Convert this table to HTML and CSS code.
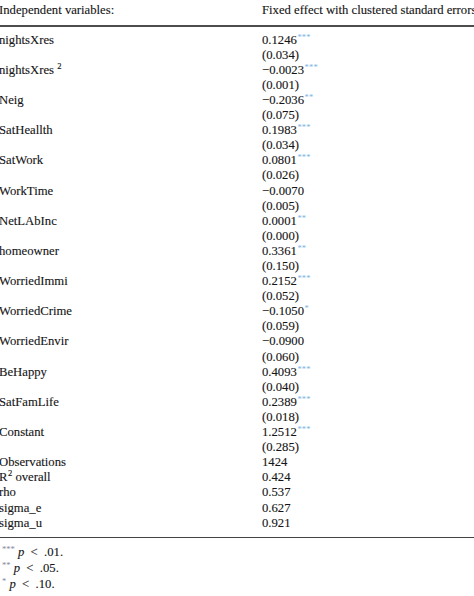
FILE: index.html
```html
<!DOCTYPE html>
<html>
<head>
<meta charset="utf-8">
<link rel="stylesheet" href="styles.css">
</head>
<body>
<div class="page">
  <div class="row head">
    <div class="lab">Independent variables:</div>
    <div class="val">Fixed effect with clustered standard errors</div>
  </div>
  <div class="tbody">
    <div class="row"><div class="lab">nightsXres</div><div class="val"><div>0.1246<sup class="st">***</sup></div><div>(0.034)</div></div></div>
    <div class="row"><div class="lab">nightsXres <sup class="sq">2</sup></div><div class="val"><div>−0.0023<sup class="st">***</sup></div><div>(0.001)</div></div></div>
    <div class="row"><div class="lab">Neig</div><div class="val"><div>−0.2036<sup class="st">**</sup></div><div>(0.075)</div></div></div>
    <div class="row"><div class="lab">SatHeallth</div><div class="val"><div>0.1983<sup class="st">***</sup></div><div>(0.034)</div></div></div>
    <div class="row"><div class="lab">SatWork</div><div class="val"><div>0.0801<sup class="st">***</sup></div><div>(0.026)</div></div></div>
    <div class="row"><div class="lab">WorkTime</div><div class="val"><div>−0.0070</div><div>(0.005)</div></div></div>
    <div class="row"><div class="lab">NetLAbInc</div><div class="val"><div>0.0001<sup class="st">**</sup></div><div>(0.000)</div></div></div>
    <div class="row"><div class="lab">homeowner</div><div class="val"><div>0.3361<sup class="st">**</sup></div><div>(0.150)</div></div></div>
    <div class="row"><div class="lab">WorriedImmi</div><div class="val"><div>0.2152<sup class="st">***</sup></div><div>(0.052)</div></div></div>
    <div class="row"><div class="lab">WorriedCrime</div><div class="val"><div>−0.1050<sup class="st">*</sup></div><div>(0.059)</div></div></div>
    <div class="row"><div class="lab">WorriedEnvir</div><div class="val"><div>−0.0900</div><div>(0.060)</div></div></div>
    <div class="row"><div class="lab">BeHappy</div><div class="val"><div>0.4093<sup class="st">***</sup></div><div>(0.040)</div></div></div>
    <div class="row"><div class="lab">SatFamLife</div><div class="val"><div>0.2389<sup class="st">***</sup></div><div>(0.018)</div></div></div>
    <div class="row"><div class="lab">Constant</div><div class="val"><div>1.2512<sup class="st">***</sup></div><div>(0.285)</div></div></div>
    <div class="row"><div class="lab">Observations</div><div class="val">1424</div></div>
    <div class="row"><div class="lab">R<sup class="sq2">2</sup> overall</div><div class="val">0.424</div></div>
    <div class="row"><div class="lab">rho</div><div class="val">0.537</div></div>
    <div class="row"><div class="lab">sigma_e</div><div class="val">0.627</div></div>
    <div class="row"><div class="lab">sigma_u</div><div class="val">0.921</div></div>
  </div>
  <div class="notes">
    <div class="note"><sup class="fst">***</sup> <i>p</i>&nbsp;&nbsp;&lt;&nbsp;&nbsp;.01.</div>
    <div class="note"><sup class="fst">**</sup> <i>p</i>&nbsp;&nbsp;&lt;&nbsp;&nbsp;.05.</div>
    <div class="note"><sup class="fst">*</sup> <i>p</i>&nbsp;&nbsp;&lt;&nbsp;&nbsp;.10.</div>
  </div>
</div>
</body>
</html>
```

FILE: styles.css
```css
html, body {
  margin: 0;
  padding: 0;
  background: #ffffff;
}

body {
  width: 474px;
  height: 596px;
  overflow: hidden;
  font-family: "Liberation Serif", "Times New Roman", serif;
  font-size: 12.7px;
  color: #151515;
  -webkit-text-stroke: 0.12px #151515;
}

.page {
  margin-left: -1px;
}

.row {
  display: grid;
  grid-template-columns: 263px auto;
  line-height: 15.1px;
  white-space: nowrap;
}

.head {
  padding-top: 2.5px;
  padding-bottom: 7px;
  border-bottom: 2px solid #4d4d4d;
}

.head .val {
  overflow: hidden;
}

.tbody {
  padding-top: 6px;
  padding-bottom: 6px;
  border-bottom: 1.5px solid #444444;
}

.st {
  font-size: 8.5px;
  line-height: 0;
  vertical-align: 4px;
  color: #78b3e3;
  -webkit-text-stroke: 0;
  letter-spacing: 0.2px;
  margin-left: 0.5px;
}

.sq {
  font-size: 8.5px;
  line-height: 0;
  vertical-align: 5px;
}

.sq2 {
  font-size: 8.5px;
  line-height: 0;
  vertical-align: 5px;
  margin-left: 0.5px;
}

.notes {
  padding-top: 6px;
  padding-left: 3px;
  line-height: 16px;
}

.note i {
  font-style: italic;
}

.fst {
  font-size: 8.5px;
  line-height: 0;
  vertical-align: 4px;
  color: #7f879a;
  -webkit-text-stroke: 0;
}
```
